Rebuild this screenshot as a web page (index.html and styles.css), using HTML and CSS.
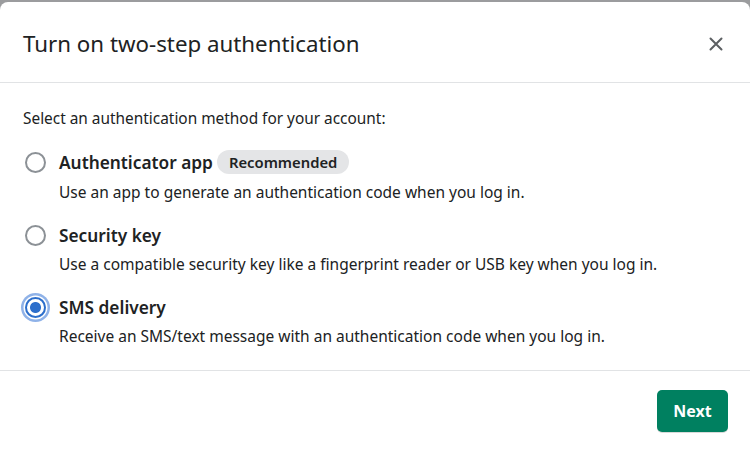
FILE: index.html
```html
<!DOCTYPE html>
<html>
<head>
<meta charset="utf-8">
<link rel="stylesheet" href="styles.css">
</head>
<body>
<div class="modal">
  <div class="header">
    <h1 class="title">Turn on two-step authentication</h1>
    <button class="close" aria-label="Close">
      <svg width="16" height="16" viewBox="0 0 16 16"><path d="M2.5 2.5 L13.5 13.5 M13.5 2.5 L2.5 13.5" stroke="#5c5f62" stroke-width="2" stroke-linecap="round"/></svg>
    </button>
  </div>
  <div class="body">
    <p class="intro">Select an authentication method for your account:</p>
    <div class="option">
      <div class="row">
        <span class="radio"></span>
        <span class="label">Authenticator app</span>
        <span class="badge">Recommended</span>
      </div>
      <p class="desc">Use an app to generate an authentication code when you log in.</p>
    </div>
    <div class="option">
      <div class="row">
        <span class="radio"></span>
        <span class="label">Security key</span>
      </div>
      <p class="desc">Use a compatible security key like a fingerprint reader or USB key when you log in.</p>
    </div>
    <div class="option">
      <div class="row">
        <span class="radio checked"></span>
        <span class="label">SMS delivery</span>
      </div>
      <p class="desc">Receive an SMS/text message with an authentication code when you log in.</p>
    </div>
  </div>
  <div class="footer">
    <button class="next">Next</button>
  </div>
</div>
</body>
</html>
```
FILE: styles.css
```css
* { box-sizing: border-box; }
html, body { margin: 0; padding: 0; }
body {
  width: 750px;
  height: 450px;
  background: #9b9c9e;
  font-family: "Noto Sans", "Open Sans", sans-serif;
  color: #202223;
  overflow: hidden;
  padding-top: 2px;
}
.modal {
  background: #fff;
  border-radius: 8px;
  height: 460px;
}
.header {
  display: flex;
  align-items: center;
  justify-content: space-between;
  height: 81px;
  padding: 3px 26px 0 23px;
  border-bottom: 1px solid #e1e3e5;
}
.title {
  margin: 0;
  font-size: 22.3px;
  font-weight: 400;
}
.close {
  border: 0;
  background: none;
  padding: 0;
  width: 16px;
  height: 16px;
  display: flex;
}
.body {
  padding: 25px 23px 23px;
  border-bottom: 1px solid #e1e3e5;
}
.intro {
  margin: 0 0 18px;
  font-size: 15.4px;
  line-height: 22px;
}
.option { margin-bottom: 18px; }
.option:last-child { margin-bottom: 0; }
.row {
  display: flex;
  align-items: center;
  height: 28px;
}
.radio {
  width: 21px;
  height: 21px;
  border: 2px solid #8c9196;
  border-radius: 50%;
  margin-left: 2px;
  margin-right: 13px;
  flex: none;
}
.radio.checked {
  border-color: #2c6ecb;
  background: radial-gradient(circle, #2c6ecb 0 5px, #fff 6px);
  box-shadow: 0 0 0 1.5px #fff, 0 0 0 4px #8fb2e8;
}
.label {
  font-size: 17.3px;
  font-weight: 600;
}
.badge {
  margin-left: 4px;
  background: #e4e5e7;
  border-radius: 12px;
  padding: 1px 12px;
  font-size: 14.8px;
  font-weight: 600;
  line-height: 22px;
}
.desc {
  margin: 5px 0 0 36px;
  font-size: 15.5px;
  line-height: 22px;
}
.option + .option .desc { margin-top: 4px; }
.footer {
  display: flex;
  justify-content: flex-end;
  padding: 19px 22px;
}
.next {
  background: #008060;
  color: #fff;
  border: 0;
  border-radius: 5px;
  width: 71px;
  height: 42px;
  font-family: inherit;
  font-size: 16px;
  font-weight: 700;
  box-shadow: 0 1px 0 rgba(0,0,0,0.15);
}
```
